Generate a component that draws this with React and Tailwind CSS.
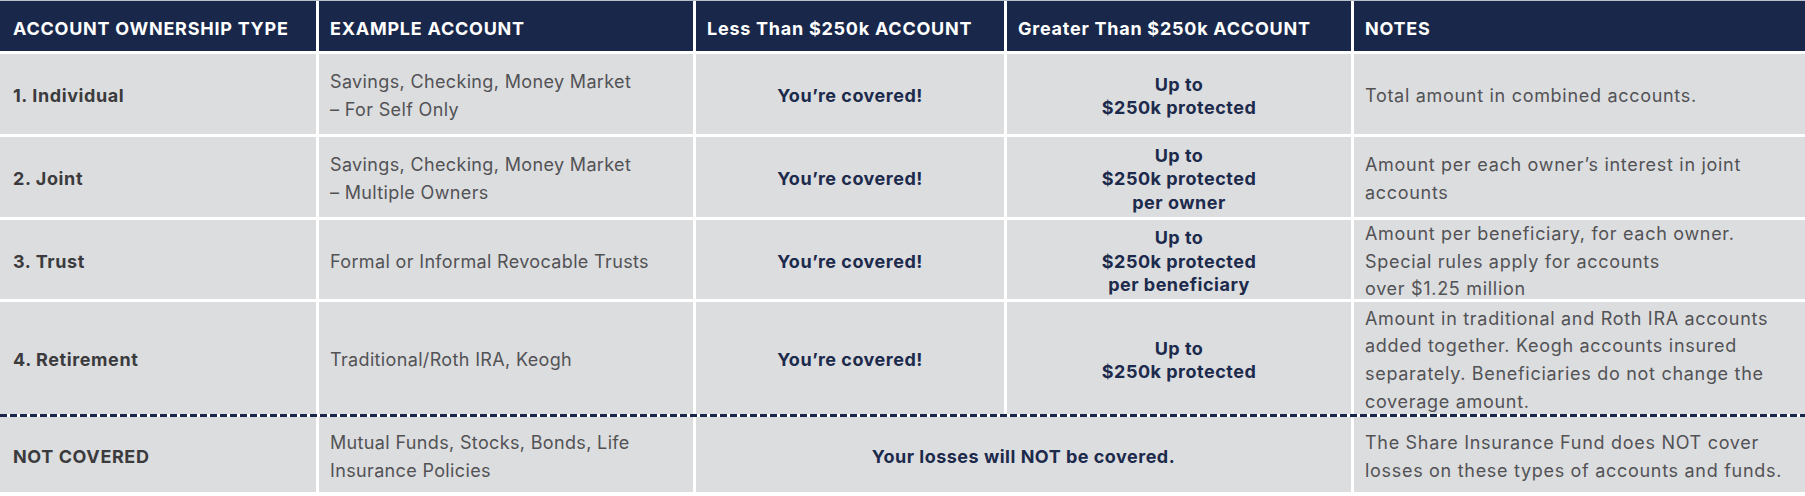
import React from 'react';

const headers = [
  'ACCOUNT OWNERSHIP TYPE',
  'EXAMPLE ACCOUNT',
  'Less Than $250k ACCOUNT',
  'Greater Than $250k ACCOUNT',
  'NOTES',
];

const rows = [
  {
    type: '1. Individual',
    example: ['Savings, Checking, Money Market', '– For Self Only'],
    greater: ['Up to', '$250k protected'],
    notes: ['Total amount in combined accounts.'],
    h: 'h-[80px]',
  },
  {
    type: '2. Joint',
    example: ['Savings, Checking, Money Market', '– Multiple Owners'],
    greater: ['Up to', '$250k protected', 'per owner'],
    notes: ['Amount per each owner’s interest in joint', 'accounts'],
    h: 'h-[80px]',
  },
  {
    type: '3. Trust',
    example: ['Formal or Informal Revocable Trusts'],
    greater: ['Up to', '$250k protected', 'per beneficiary'],
    notes: ['Amount per beneficiary, for each owner.', 'Special rules apply for accounts', 'over $1.25 million'],
    h: 'h-[79px]',
  },
  {
    type: '4. Retirement',
    example: ['Traditional/Roth IRA, Keogh'],
    greater: ['Up to', '$250k protected'],
    notes: [
      'Amount in traditional and Roth IRA accounts',
      'added together. Keogh accounts insured',
      'separately. Beneficiaries do not change the',
      'coverage amount.',
    ],
    h: 'h-[112px]',
  },
];

const cols = 'grid grid-cols-[316px_374px_308px_344px_1fr] gap-x-[3px]';

// shared cell looks
const typeCell = 'flex items-center pt-[4px] pl-[13px] bg-[#dcdddf] text-[#3b3b3d] font-bold tracking-[0.6px]';
const exampleCell = 'flex flex-col justify-center pt-[4px] pl-[11px] bg-[#dcdddf] text-[#525255] tracking-[0.35px]';
const navyCell = 'flex items-center justify-center pt-[4px] bg-[#dcdddf] text-[#1c2a4c] font-bold tracking-[0.5px]';
const notesCell = 'flex flex-col justify-center pt-[4px] pl-[11px] bg-[#dcdddf] text-[#525255] tracking-[0.7px]';

const Lines = ({ lines }) => lines.map((l, i) => <div key={i}>{l}</div>);

const App = () => {
  return (
    <div
      className="w-[1805px] h-[496px] bg-white text-[18px] leading-[27.6px]"
      style={{ fontFamily: 'Inter, "Open Sans", sans-serif' }}
    >
      <div className="h-px bg-[#b7bfcb]" />
      <div className={`${cols} gap-y-[3px]`}>
        {headers.map((h, i) => (
          <div
            key={h}
            className={`h-[50px] flex items-center pt-[6px] bg-[#19284a] text-white font-bold tracking-[0.75px] ${
              i === 0 ? 'pl-[13px]' : 'pl-[11px]'
            }`}
          >
            {h}
          </div>
        ))}
        {rows.map((r) => (
          <React.Fragment key={r.type}>
            <div className={`${r.h} ${typeCell}`}>{r.type}</div>
            <div className={`${r.h} ${exampleCell}`}>
              <Lines lines={r.example} />
            </div>
            <div className={`${r.h} ${navyCell}`}>You’re covered!</div>
            <div className={`${r.h} ${navyCell} flex-col text-center leading-[23.5px]`}>
              <Lines lines={r.greater} />
            </div>
            <div className={`${r.h} ${notesCell}`}>
              <Lines lines={r.notes} />
            </div>
          </React.Fragment>
        ))}
      </div>
      <div className="h-[3px] bg-[repeating-linear-gradient(90deg,#19284a_0_7px,#ffffff_7px_10px)]" />
      <div className={cols}>
        <div className={`h-[75px] ${typeCell}`}>NOT COVERED</div>
        <div className={`h-[75px] ${exampleCell}`}>
          <div>Mutual Funds, Stocks, Bonds, Life</div>
          <div>Insurance Policies</div>
        </div>
        <div className={`col-span-2 h-[75px] ${navyCell}`}>Your losses will NOT be covered.</div>
        <div className={`h-[75px] ${notesCell}`}>
          <div>The Share Insurance Fund does NOT cover</div>
          <div>losses on these types of accounts and funds.</div>
        </div>
      </div>
    </div>
  );
};

export default App;
